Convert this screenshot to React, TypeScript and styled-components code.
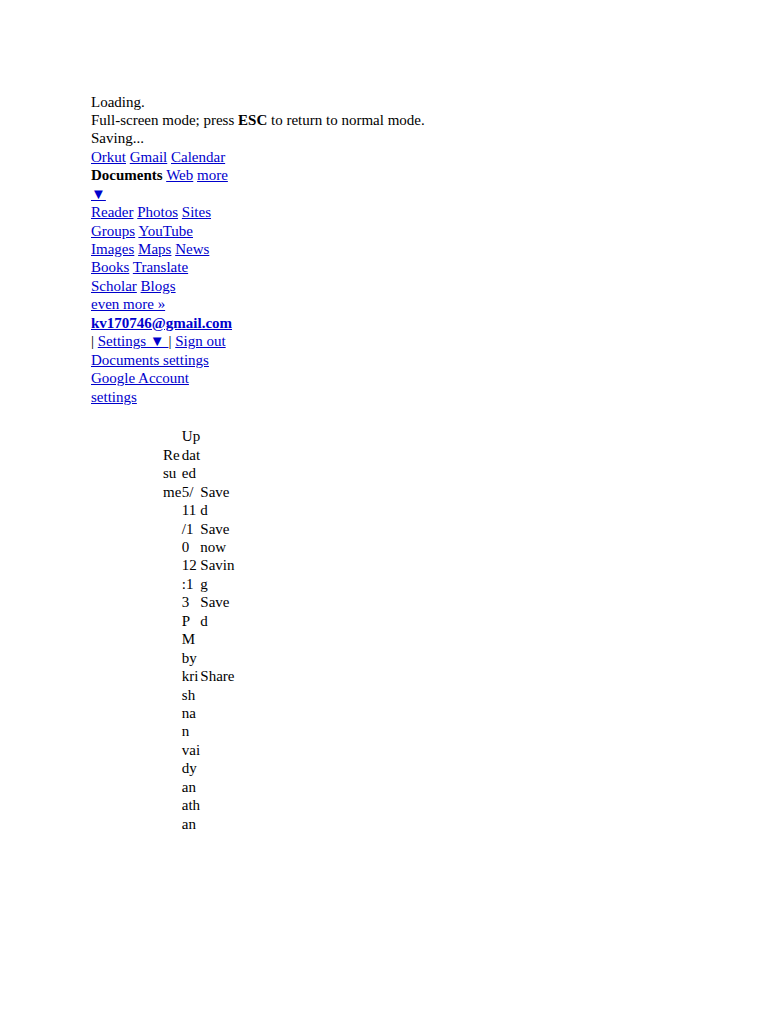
import React from "react";
import styled, { createGlobalStyle } from "styled-components";

const LINE = 18.44;

const Global = createGlobalStyle`
  html, body {
    margin: 0;
    padding: 0;
    background: #ffffff;
  }
  body {
    font-family: "Liberation Serif", "Times New Roman", serif;
    font-size: 15px;
    line-height: ${LINE}px;
    color: #000000;
  }
`;

const Page = styled.div`
  padding: 92.5px 0 0 91px;
  min-height: 1024px;
  box-sizing: border-box;
`;

const Line = styled.div``;

const Bar = styled.div`
  width: 142px;
`;

const Menu = styled.div``;

const Link = styled.a<{ $bold?: boolean }>`
  color: #0000cc;
  text-decoration: underline;
  font-weight: ${(p) => (p.$bold ? "bold" : "normal")};
  cursor: pointer;
`;

const NoWrap = styled(Link)`
  white-space: nowrap;
`;

const Strong = styled.b`
  font-weight: bold;
`;

const Sheet = styled.div`
  display: flex;
  align-items: flex-start;
  margin-top: ${LINE + 3}px;
  padding-left: 72px;
`;

const Cell = styled.div<{ $width: number; $offset: number }>`
  width: ${(p) => p.$width}px;
  padding-top: ${(p) => p.$offset * LINE}px;
  line-break: anywhere;
  flex: none;
`;

const Status = styled.div<{ $gap?: number }>`
  margin-top: ${(p) => (p.$gap ?? 0) * LINE}px;
`;

export default function App() {
  return (
    <>
      <Global />
      <Page>
        <Line>Loading.</Line>
        <Line>
          Full-screen mode; press <Strong>ESC</Strong> to return to normal mode.
        </Line>
        <Line>Saving...</Line>
        <Bar>
          <Link>Orkut</Link> <Link>Gmail</Link> <Link>Calendar</Link>{" "}
          <Strong>Documents</Strong> <Link>Web</Link> <Link>more ▼</Link>
          <Menu>
            <Link>Reader</Link> <Link>Photos</Link> <Link>Sites</Link>{" "}
            <Link>Groups</Link> <Link>YouTube</Link> <Link>Images</Link>{" "}
            <Link>Maps</Link> <Link>News</Link> <Link>Books</Link>{" "}
            <Link>Translate</Link> <Link>Scholar</Link> <Link>Blogs</Link>{" "}
            <NoWrap>even more »</NoWrap>
          </Menu>
        </Bar>
        <Bar>
          <Link $bold>kv170746@gmail.com</Link> | <Link>Settings ▼ </Link>|{" "}
          <Link>Sign out</Link> <Link>Documents settings</Link>{" "}
          <Link>Google Account settings</Link>
        </Bar>
        <Sheet>
          <Cell $width={18.8} $offset={1}>
            Resume
          </Cell>
          <Cell $width={18.5} $offset={0}>
            Updated 5/11/10 12:13 PM by krishnan vaidyanathan
          </Cell>
          <Cell $width={35} $offset={3}>
            <Status>Saved</Status>
            <Status>Save now</Status>
            <Status>Saving</Status>
            <Status>Saved</Status>
            <Status $gap={2}>Share</Status>
          </Cell>
        </Sheet>
      </Page>
    </>
  );
}
